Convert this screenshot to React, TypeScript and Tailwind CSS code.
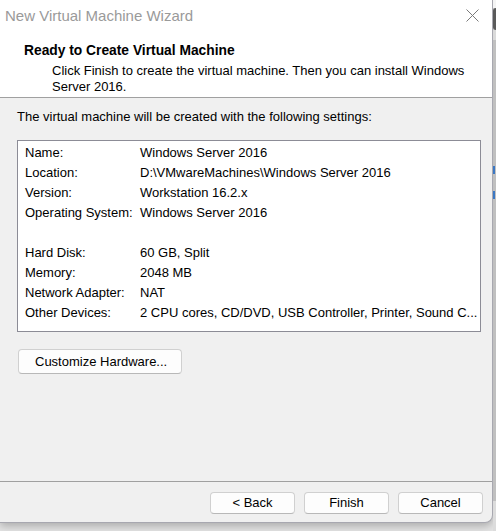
import React from "react";

const settingsTop: [string, string][] = [
  ["Name:", "Windows Server 2016"],
  ["Location:", "D:\\VMwareMachines\\Windows Server 2016"],
  ["Version:", "Workstation 16.2.x"],
  ["Operating System:", "Windows Server 2016"],
];

const settingsBottom: [string, string][] = [
  ["Hard Disk:", "60 GB, Split"],
  ["Memory:", "2048 MB"],
  ["Network Adapter:", "NAT"],
  ["Other Devices:", "2 CPU cores, CD/DVD, USB Controller, Printer, Sound C..."],
];

function Row({ label, value }: { label: string; value: string }) {
  return (
    <div className="flex h-[20px] items-center whitespace-nowrap">
      <span className="w-[115px] shrink-0">{label}</span>
      <span>{value}</span>
    </div>
  );
}

function WinButton({ children, className = "" }: { children: React.ReactNode; className?: string }) {
  return (
    <button
      className={
        "flex items-center justify-center rounded-[4px] border border-[#d0d0d0] border-b-[#b8b8b8] bg-[#fdfdfd] text-[13px] text-black " +
        className
      }
    >
      {children}
    </button>
  );
}

export default function App() {
  return (
    <div
      className="flex h-[531px] w-[496px] overflow-hidden bg-[#e4e4e4]"
      style={{ fontFamily: '"Liberation Sans", Arial, sans-serif' }}
    >
      {/* dialog window */}
      <div className="flex h-[523px] w-[493px] shrink-0 flex-col overflow-hidden rounded-br-[8px] border-r border-b border-[#a8a8b0] bg-[#f0f0f0] shadow-[0_3px_8px_rgba(0,0,0,0.25)]">
        {/* title bar */}
        <div className="flex h-[32px] shrink-0 items-center justify-between bg-white pl-[5px] pr-[13px]">
          <span className="text-[15px] text-[#9a9a9a]">New Virtual Machine Wizard</span>
          <svg width="13" height="13" viewBox="0 0 13 13" className="mt-[-1px]">
            <path d="M0.5 0.5 L12.5 12.5 M12.5 0.5 L0.5 12.5" stroke="#7a7a7a" strokeWidth="1" fill="none" />
          </svg>
        </div>

        {/* page header */}
        <div className="flex h-[66px] shrink-0 flex-col border-b border-[#a0a0a0] bg-white pl-[24px] pt-[11px] text-black">
          <div className="text-[13.8px] font-bold leading-[16px]">Ready to Create Virtual Machine</div>
          <div className="mt-[4px] pl-[28px] pr-[20px] text-[13px] leading-[16px]">
            Click Finish to create the virtual machine. Then you can install Windows Server 2016.
          </div>
        </div>

        {/* page body */}
        <div className="flex flex-1 flex-col pl-[17px] pt-[11px] text-[13px] text-black">
          <div className="h-[16px] leading-[16px]">The virtual machine will be created with the following settings:</div>
          <div className="mt-[15px] flex h-[192px] w-[464px] flex-col border border-[#8c8c96] bg-white pl-[7px] pt-[2px]">
            {settingsTop.map(([l, v]) => (
              <Row key={l} label={l} value={v} />
            ))}
            <div className="h-[20px]" />
            {settingsBottom.map(([l, v]) => (
              <Row key={l} label={l} value={v} />
            ))}
          </div>
          <div className="mt-[17px] flex">
            <WinButton className="ml-[1px] h-[25px] w-[164px] justify-start pl-[16px]">Customize Hardware...</WinButton>
          </div>
        </div>

        {/* footer buttons */}
        <div className="flex h-[41px] shrink-0 justify-end gap-[9px] border-t border-[#a0a0a0] pr-[9px] pt-[10px]">
          <WinButton className="h-[22px] w-[85px]">&lt; Back</WinButton>
          <WinButton className="h-[22px] w-[85px]">Finish</WinButton>
          <WinButton className="h-[22px] w-[85px]">Cancel</WinButton>
        </div>
      </div>

      {/* desktop strip behind the dialog */}
      <div className="flex h-full flex-1 flex-col">
        <div className="h-[8px] bg-[#f4f4f4]" />
        <div className="h-[22px] rounded-l-[4px] bg-[#5a5a5a]" />
        <div className="h-[10px] bg-[#dadada]" />
        <div className="flex flex-1 flex-col bg-[#c0c0c0]">
          <div className="mt-[126px] h-[8px] w-[2px] bg-[#3b78c4]" />
          <div className="mt-[17px] h-[8px] w-[2px] bg-[#3b78c4]" />
        </div>
        <div className="h-[30px] bg-[#dcdcdc]" />
      </div>
    </div>
  );
}
